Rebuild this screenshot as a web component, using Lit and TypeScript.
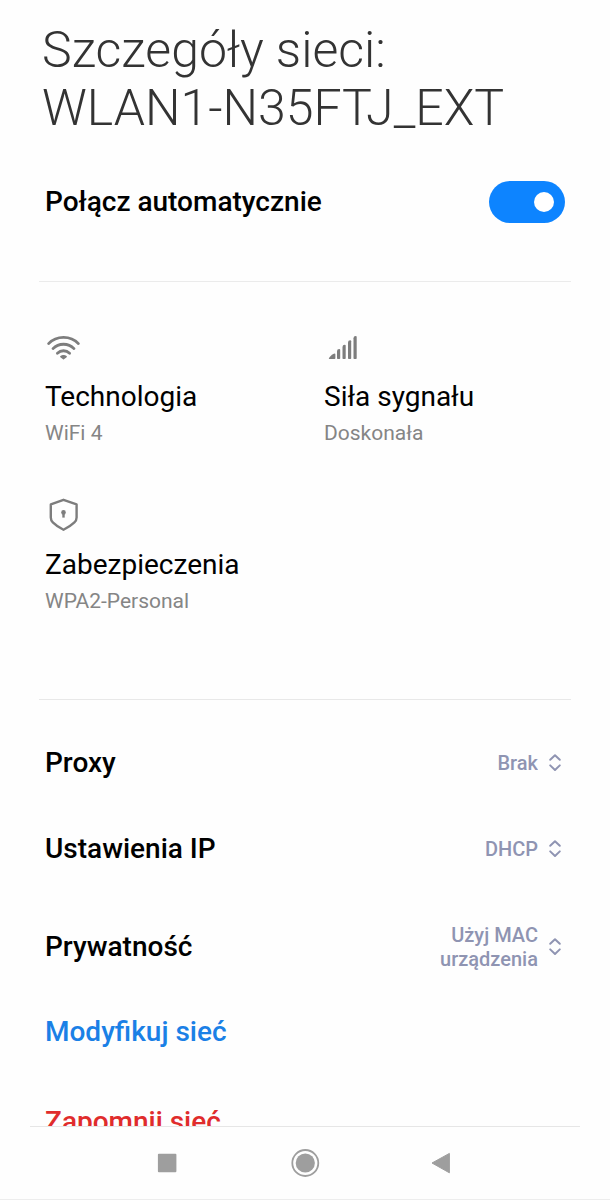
import { LitElement, html, css, svg } from "lit";
import { customElement, state } from "lit/decorators.js";

const wifiIcon = svg`
  <svg class="icon" viewBox="0 0 36 36" fill="none" stroke="#7d7d7d" stroke-width="2.8" stroke-linecap="round">
    <path d="M3.6 13.6C11.6 5.3 25.6 5.3 33.4 13.6" />
    <path d="M8 18.6C13.6 12.8 23.4 12.8 29 18.6" />
    <path d="M12.4 23.2C15.8 19.9 21.2 19.9 24.6 23.2" />
    <path d="M15.8 26.6Q18.5 24.6 21.2 26.6L18.5 28.8Z" fill="#7d7d7d" stroke-width="1.4" stroke-linejoin="round" />
  </svg>`;

const signalIcon = svg`
  <svg class="icon" viewBox="0 0 36 36" fill="#7d7d7d">
    <path d="M5 28Q8 24 10.6 23.6Q11.4 23.6 11.4 24.4V28.2Q11.4 29 10.6 29H5.6Q4.4 29 5 28Z" />
    <path d="M13 21.2Q13 19 15.2 19Q16.2 19 16.2 20V28.2Q16.2 29 15.4 29H13.8Q13 29 13 28.2Z" />
    <path d="M18.5 16.9Q18.5 14.7 20.7 14.7Q21.7 14.7 21.7 15.7V28.2Q21.7 29 20.9 29H19.3Q18.5 29 18.5 28.2Z" />
    <path d="M24 12.5Q24 10.3 26.2 10.3Q27.2 10.3 27.2 11.3V28.2Q27.2 29 26.4 29H24.8Q24 29 24 28.2Z" />
    <path d="M29.5 8.2Q29.5 6 31.7 6Q32.7 6 32.7 7V28.2Q32.7 29 31.9 29H30.3Q29.5 29 29.5 28.2Z" />
  </svg>`;

const shieldIcon = svg`
  <svg class="icon" viewBox="0 0 36 36" fill="none" stroke="#7d7d7d" stroke-width="2.4" stroke-linejoin="round">
    <path d="M18.5 1.8L31.6 6.4V19.6Q31.6 22.4 29.4 24.4Q25.2 28.4 18.5 31.8Q11.8 28.4 7.8 24.4Q5.8 22.4 5.8 19.6V6.4Z" />
    <circle cx="18.5" cy="14.4" r="2.3" fill="#7d7d7d" stroke="none" />
    <path d="M18.5 15V19.6" stroke-width="2.4" />
  </svg>`;

const chevrons = svg`
  <svg class="chevrons" viewBox="0 0 14 20" fill="none" stroke="#8f94b2" stroke-width="2" stroke-linejoin="round" stroke-linecap="round" aria-hidden="true">
    <path d="M2.2 6.8L7 2.2L11.8 6.8" />
    <path d="M2.2 12.4L7 17L11.8 12.4" />
  </svg>`;

const features = [
  { icon: wifiIcon, name: "Technologia", value: "WiFi 4" },
  { icon: signalIcon, name: "Siła sygnału", value: "Doskonała" },
  { icon: shieldIcon, name: "Zabezpieczenia", value: "WPA2-Personal" },
];

const settings = [
  { id: "proxy", name: "Proxy", value: "Brak" },
  { id: "ip", name: "Ustawienia IP", value: "DHCP" },
  { id: "privacy", name: "Prywatność", value: "Użyj MAC urządzenia" },
];

@customElement("app-root")
export class AppRoot extends LitElement {
  @state() private autoConnect = true;

  static styles = css`
    :host {
      display: flex;
      flex-direction: column;
      height: 100vh;
      box-sizing: border-box;
      background: #fefefe;
      color: #000;
      font-family: Roboto, sans-serif;
      font-size: 28px;
      line-height: 32px;
    }
    .content {
      flex: 1;
      min-height: 0;
      overflow-y: auto;
      scrollbar-width: none;
      padding: 0 39px;
    }
    .title {
      margin: 0;
      padding: 21px 3px 0;
      font-size: 50px;
      line-height: 58px;
      font-weight: 300;
      color: #333;
      overflow-wrap: anywhere;
    }
    .auto {
      display: flex;
      align-items: center;
      justify-content: space-between;
      padding: 44px 6px 58px;
      border-bottom: 1px solid #ebebeb;
      font-weight: 500;
    }
    .switch {
      appearance: none;
      display: flex;
      align-items: center;
      box-sizing: border-box;
      width: 76px;
      height: 42px;
      margin: 0;
      padding: 0 11px;
      border-radius: 21px;
      background: #d8d8d8;
    }
    .switch::before {
      content: "";
      width: 20px;
      height: 20px;
      border-radius: 50%;
      background: #fff;
    }
    .switch:checked {
      justify-content: flex-end;
      background: #0d84ff;
    }
    .features {
      display: grid;
      grid-template-columns: 1fr 1fr;
      gap: 53px 38px;
      padding: 48px 6px 86px;
      border-bottom: 1px solid #e8e8e8;
    }
    .icon {
      display: block;
      width: 36px;
      height: 36px;
      margin-bottom: 15px;
    }
    .value {
      margin-top: 8px;
      font-size: 21px;
      line-height: 24px;
      color: #858585;
    }
    .settings {
      padding: 20px 6px 0;
      font-weight: 500;
    }
    .row {
      display: flex;
      align-items: center;
      justify-content: space-between;
      padding: 27px 0;
    }
    .picker {
      display: flex;
      align-items: center;
      gap: 10px;
      padding-right: 3px;
    }
    .select {
      appearance: none;
      max-width: 110px;
      margin: 0;
      padding: 4px 0;
      border: 0;
      background: none;
      font: inherit;
      font-size: 20px;
      line-height: 24px;
      color: #8f94b2;
      text-align: right;
      text-align-last: right;
      white-space: normal;
    }
    .chevrons {
      flex: none;
      width: 14px;
      height: 20px;
    }
    .actions {
      display: flex;
      flex-direction: column;
      align-items: flex-start;
      gap: 30px;
      padding: 0 6px;
    }
    .action {
      padding: 14px 0;
      border: 0;
      background: none;
      font: inherit;
      font-weight: 500;
      color: #1a80e6;
    }
    .danger {
      color: #e02c2c;
    }
    .nav {
      flex: none;
      padding: 0 30px;
      border-bottom: 1px solid #ededed;
    }
    .keys {
      display: flex;
      justify-content: center;
      gap: 98px;
      padding: 16px 0;
      border-top: 1px solid #e6e6e6;
    }
    .key {
      padding: 0;
      border: 0;
      background: none;
    }
    .glyph {
      display: block;
      width: 40px;
      height: 40px;
    }
  `;

  render() {
    return html`
      <main class="content">
        <h1 class="title">Szczegóły sieci: WLAN1-N35FTJ_EXT</h1>
        <div class="auto">
          <label for="auto">Połącz automatycznie</label>
          <input
            class="switch"
            id="auto"
            type="checkbox"
            role="switch"
            .checked=${this.autoConnect}
            @change=${(e: Event) => (this.autoConnect = (e.target as HTMLInputElement).checked)}
          />
        </div>
        <section class="features">
          ${features.map(
            (f) => html`<div>
              ${f.icon}
              <div>${f.name}</div>
              <div class="value">${f.value}</div>
            </div>`
          )}
        </section>
        <section class="settings">
          ${settings.map(
            (s) => html`<div class="row">
              <label for=${s.id}>${s.name}</label>
              <div class="picker">
                <select class="select" id=${s.id}>
                  <option>${s.value}</option>
                </select>
                ${chevrons}
              </div>
            </div>`
          )}
        </section>
        <div class="actions">
          <button class="action">Modyfikuj sieć</button>
          <button class="action danger">Zapomnij sieć</button>
        </div>
      </main>
      <nav class="nav">
        <div class="keys">
          <button class="key" aria-label="Ostatnie">
            <svg class="glyph" viewBox="0 0 40 40"><rect x="10.9" y="10.8" width="18.5" height="18.4" rx="1" fill="#9e9e9e" /></svg>
          </button>
          <button class="key" aria-label="Ekran główny">
            <svg class="glyph" viewBox="0 0 40 40">
              <circle cx="20.3" cy="20" r="13" fill="none" stroke="#9e9e9e" stroke-width="1.8" />
              <circle cx="20.3" cy="20" r="9.6" fill="#9e9e9e" />
            </svg>
          </button>
          <button class="key" aria-label="Wstecz">
            <svg class="glyph" viewBox="0 0 40 40"><path d="M9 20L26.4 10.4V29.8Z" fill="#9e9e9e" stroke="#9e9e9e" stroke-width="1" stroke-linejoin="round" /></svg>
          </button>
        </div>
      </nav>
    `;
  }
}
